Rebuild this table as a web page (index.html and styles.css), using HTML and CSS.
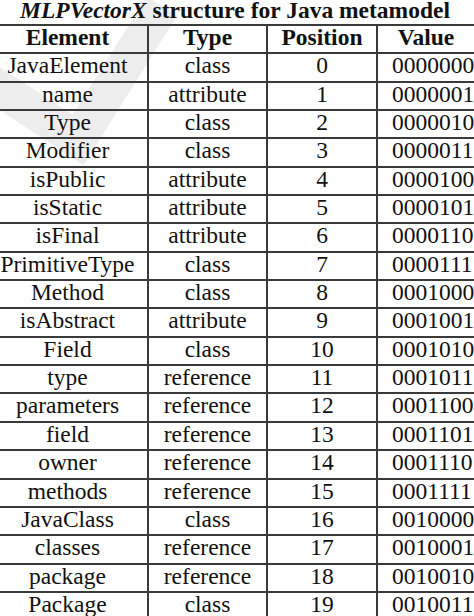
FILE: index.html
```html
<!DOCTYPE html>
<html>
<head>
<meta charset="utf-8">
<link rel="stylesheet" href="styles.css">
</head>
<body>
<div class="page">
  <svg class="watermark" width="200" height="180" viewBox="0 0 200 180">
    <polyline points="-10,82 78,140 162,6" fill="none" stroke="#ededed" stroke-width="36" stroke-linejoin="miter"/>
  </svg>
  <div class="sheet">
    <div class="title"><i>MLPVectorX</i> structure for Java metamodel</div>
    <table class="grid">
      <colgroup>
        <col class="c1"><col class="c2"><col class="c3"><col class="c4">
      </colgroup>
      <thead>
        <tr><th>Element</th><th>Type</th><th>Position</th><th class="hval">Value</th></tr>
      </thead>
      <tbody>
        <tr><td>JavaElement</td><td>class</td><td>0</td><td class="val">0000000</td></tr>
        <tr><td>name</td><td>attribute</td><td>1</td><td class="val">0000001</td></tr>
        <tr><td>Type</td><td>class</td><td>2</td><td class="val">0000010</td></tr>
        <tr><td>Modifier</td><td>class</td><td>3</td><td class="val">0000011</td></tr>
        <tr><td>isPublic</td><td>attribute</td><td>4</td><td class="val">0000100</td></tr>
        <tr><td>isStatic</td><td>attribute</td><td>5</td><td class="val">0000101</td></tr>
        <tr><td>isFinal</td><td>attribute</td><td>6</td><td class="val">0000110</td></tr>
        <tr><td>PrimitiveType</td><td>class</td><td>7</td><td class="val">0000111</td></tr>
        <tr><td>Method</td><td>class</td><td>8</td><td class="val">0001000</td></tr>
        <tr><td>isAbstract</td><td>attribute</td><td>9</td><td class="val">0001001</td></tr>
        <tr><td>Field</td><td>class</td><td>10</td><td class="val">0001010</td></tr>
        <tr><td>type</td><td>reference</td><td>11</td><td class="val">0001011</td></tr>
        <tr><td>parameters</td><td>reference</td><td>12</td><td class="val">0001100</td></tr>
        <tr><td>field</td><td>reference</td><td>13</td><td class="val">0001101</td></tr>
        <tr><td>owner</td><td>reference</td><td>14</td><td class="val">0001110</td></tr>
        <tr><td>methods</td><td>reference</td><td>15</td><td class="val">0001111</td></tr>
        <tr><td>JavaClass</td><td>class</td><td>16</td><td class="val">0010000</td></tr>
        <tr><td>classes</td><td>reference</td><td>17</td><td class="val">0010001</td></tr>
        <tr><td>package</td><td>reference</td><td>18</td><td class="val">0010010</td></tr>
        <tr><td>Package</td><td>class</td><td>19</td><td class="val">0010011</td></tr>
      </tbody>
    </table>
  </div>
</div>
</body>
</html>
```

FILE: styles.css
```css
html, body {
  margin: 0;
  padding: 0;
  background: #ffffff;
}

body {
  width: 474px;
  height: 616px;
  overflow: hidden;
  font-family: "Liberation Serif", "Times New Roman", serif;
  color: #111111;
}

.page {
  position: relative;
  width: 474px;
  height: 616px;
  overflow: hidden;
}

.watermark {
  position: absolute;
  left: 0;
  top: 0;
  z-index: 0;
}

.sheet {
  position: relative;
  z-index: 1;
  margin-left: -14px;
  width: 520px;
}

.title {
  width: 490px;
  padding-left: 8px;
  box-sizing: border-box;
  text-align: center;
  font-weight: bold;
  font-size: 23.5px;
  line-height: 20px;
  height: 24px;
}

.grid {
  border-collapse: collapse;
  table-layout: fixed;
  width: 520px;
  font-size: 23.5px;
}

.c1 { width: 161px; }
.c2 { width: 119px; }
.c3 { width: 110px; }
.c4 { width: 130px; }

.grid th,
.grid td {
  border: 2px solid #3a3a3a;
  padding: 0 0 4px 0;
  line-height: 22.35px;
  text-align: center;
  white-space: nowrap;
  overflow: visible;
}

.grid th {
  font-weight: bold;
}

.grid th.hval {
  padding-right: 32px;
}

.grid td.val {
  text-align: left;
  padding-left: 14px;
}
```
